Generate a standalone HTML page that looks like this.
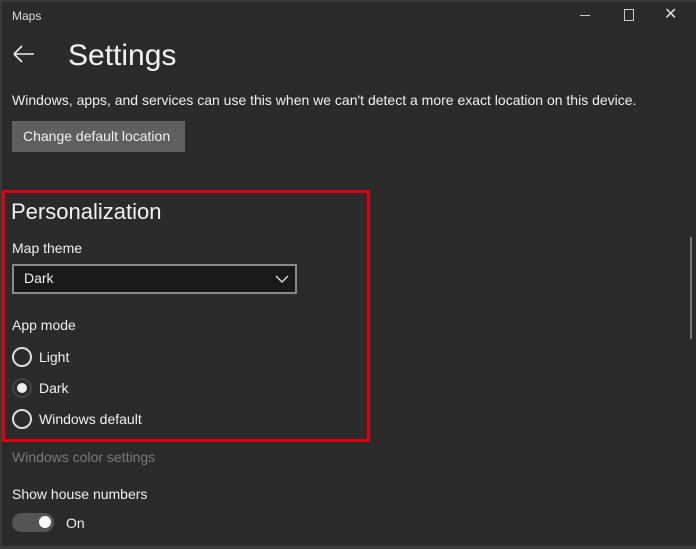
<!DOCTYPE html>
<html><head><meta charset="utf-8"><style>
html,body{margin:0;padding:0;}
body{width:696px;height:549px;background:#2b2b2b;position:relative;overflow:hidden;font-family:"Liberation Sans",sans-serif;color:#fff;}
.a{position:absolute;white-space:nowrap;}
</style></head><body>
<div class="a" style="left:0;top:0;width:696px;height:2px;background:#3a3a3a"></div>
<div class="a" style="left:0;top:0;width:2px;height:549px;background:#3a3a3a"></div>
<div class="a" style="left:0;top:546px;width:696px;height:3px;background:#3a3a3a"></div>
<div class="a" style="left:12px;top:9px;font-size:12px;color:#ddd">Maps</div>
<div class="a" style="left:580px;top:15px;width:10px;height:1px;background:#ccc"></div>
<div class="a" style="left:624px;top:9px;width:8px;height:10px;border:1px solid #ccc"></div>
<div class="a" style="left:664px;top:4px;font-size:16px;color:#ddd">✕</div>
<svg class="a" style="left:12px;top:44px" width="24" height="20"><path d="M2 10H22M2 10L10 2M2 10L10 18" stroke="#eee" stroke-width="1.6" fill="none"/></svg>
<div class="a" style="left:68px;top:39px;font-size:30px;color:#f2f2f2;font-weight:300">Settings</div>
<div class="a" style="left:12px;top:92px;font-size:14px;color:#f0f0f0">Windows, apps, and services can use this when we can't detect a more exact location on this device.</div>
<div class="a" style="left:12px;top:121px;width:173px;height:31px;background:#5f5f5f"></div>
<div class="a" style="left:23px;top:128px;font-size:14px;color:#f0f0f0">Change default location</div>
<div class="a" style="left:2px;top:190px;width:362px;height:246px;border:3px solid #e00010"></div>
<div class="a" style="left:11px;top:199px;font-size:22px;color:#f2f2f2;font-weight:300">Personalization</div>
<div class="a" style="left:12px;top:240px;font-size:14px;color:#f0f0f0">Map theme</div>
<div class="a" style="left:12px;top:264px;width:281px;height:26px;background:#1a1a1a;border:2px solid #8a8a8a"></div>
<div class="a" style="left:24px;top:270px;font-size:14px;color:#f0f0f0">Dark</div>
<svg class="a" style="left:275px;top:274px" width="14" height="10"><path d="M1 2L7 8L13 2" stroke="#ddd" stroke-width="1.4" fill="none"/></svg>
<div class="a" style="left:12px;top:317px;font-size:14px;color:#f0f0f0">App mode</div>
<div class="a" style="left:12px;top:347px;width:16px;height:16px;border:2px solid #ddd;border-radius:50%"></div>
<div class="a" style="left:39px;top:349px;font-size:14px;color:#f0f0f0">Light</div>
<div class="a" style="left:12px;top:378px;width:16px;height:16px;border:2px solid #444;border-radius:50%"></div>
<div class="a" style="left:17px;top:383px;width:10px;height:10px;background:#eee;border-radius:50%"></div>
<div class="a" style="left:39px;top:380px;font-size:14px;color:#f0f0f0">Dark</div>
<div class="a" style="left:12px;top:409px;width:16px;height:16px;border:2px solid #ddd;border-radius:50%"></div>
<div class="a" style="left:39px;top:411px;font-size:14px;color:#f0f0f0">Windows default</div>
<div class="a" style="left:12px;top:449px;font-size:14px;color:#7a7a7a">Windows color settings</div>
<div class="a" style="left:12px;top:486px;font-size:14px;color:#f0f0f0">Show house numbers</div>
<div class="a" style="left:12px;top:513px;width:42px;height:19px;background:#555;border-radius:10px"></div>
<div class="a" style="left:39px;top:516px;width:12px;height:12px;background:#fff;border-radius:50%"></div>
<div class="a" style="left:66px;top:515px;font-size:14px;color:#f0f0f0">On</div>
<div class="a" style="left:690px;top:237px;width:2px;height:102px;background:#777"></div>
</body></html>
